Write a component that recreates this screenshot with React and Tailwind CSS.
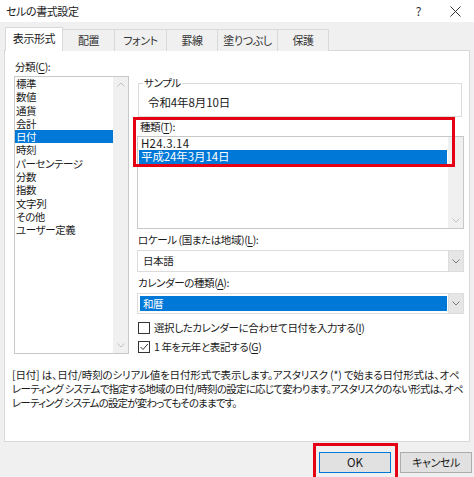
import React from 'react';

const tabs = [
  { label: '表示形式', w: 'w-[58px]', active: true },
  { label: '配置', w: 'w-[52px]' },
  { label: 'フォント', w: 'w-[52px]' },
  { label: '罫線', w: 'w-[51px]' },
  { label: '塗りつぶし', w: 'w-[60px]' },
  { label: '保護', w: 'w-[51px]' },
];

const categories = [
  '標準', '数値', '通貨', '会計', '日付', '時刻',
  'パーセンテージ', '分数', '指数', '文字列', 'その他', 'ユーザー定義',
];

const Chevron = ({ up, className = '' }) => (
  <svg width="8" height="5" viewBox="0 0 8 5" className={className}>
    <path
      d={up ? 'M0.5 4.5L4 1L7.5 4.5' : 'M0.5 0.5L4 4L7.5 0.5'}
      fill="none"
      stroke="currentColor"
      strokeWidth="1"
    />
  </svg>
);

const Key = ({ children }) => (
  <span className="underline underline-offset-[2px]">{children}</span>
);

const Checkbox = ({ checked, children, className = '' }) => (
  <div className={`flex items-center h-[16px] ${className}`}>
    <div className="w-[12px] h-[12px] border border-[#333] bg-white flex items-center justify-center ml-[1px]">
      {checked && (
        <svg width="10" height="10" viewBox="0 0 10 10">
          <path d="M1.5 5L4 7.5L8.8 2" fill="none" stroke="#333" strokeWidth="1" />
        </svg>
      )}
    </div>
    <span className="ml-[4px]">{children}</span>
  </div>
);

const Combo = ({ value, selected, className = '' }) => (
  <div className={`flex items-stretch w-[327px] border border-[#dcdcdc] bg-white ${className}`}>
    <div className="flex-1 flex items-center p-[2px] pr-[1px]">
      <div className={`flex-1 h-full flex items-center pl-[3px] ${selected ? 'bg-[#0078d7] text-white' : ''}`}>
        {value}
      </div>
    </div>
    <div className="w-[15px] bg-[#e6e6e6] border-l border-[#dcdcdc] flex items-center justify-center text-[#7a7a7a]">
      <Chevron />
    </div>
  </div>
);

export default function App() {
  return (
    <div className="relative w-[474px] h-[477px] overflow-hidden bg-[#f0f0f0] text-[10.5px] tracking-[-0.4px] text-[#1a1a1a] font-['Noto_Sans_CJK_JP','Noto_Sans',sans-serif] [font-feature-settings:'palt']">
      {/* Title bar */}
      <div className="h-[22px] bg-white flex items-center pl-[6px]">
        <span className="text-[11px] leading-[16px]">セルの書式設定</span>
        <span className="ml-auto text-[12px] text-[#333] mr-[29px]">?</span>
        <svg width="11" height="11" viewBox="0 0 11 11" className="mr-[13px]">
          <path d="M0.5 0.5L10.5 10.5M10.5 0.5L0.5 10.5" stroke="#333" strokeWidth="1" />
        </svg>
      </div>

      {/* Tabs */}
      <div className="flex items-end h-[24px] mt-[5px] pl-[5px]">
        {tabs.map((t) =>
          t.active ? (
            <div
              key={t.label}
              className={`${t.w} relative z-10 h-[24px] bg-white border-x border-t border-[#d9d9d9] flex items-center justify-center pb-[2px] text-[11px]`}
            >
              {t.label}
            </div>
          ) : (
            <div
              key={t.label}
              className={`${t.w} h-[22px] bg-[#f0f0f0] border-r border-t border-[#d9d9d9] flex items-center justify-center text-[#333] pb-[1px] text-[11px]`}
            >
              {t.label}
            </div>
          )
        )}
      </div>

      {/* Panel */}
      <div className="mx-[4px] -mt-[1px] h-[392px] border border-[#d9d9d9] bg-white flex flex-col">
        <div className="flex items-start">
          {/* Category */}
          <div className="ml-[9px] w-[115px]">
            <div className="mt-[8px] leading-[16px] pl-[1px]">
              分類(<Key>C</Key>):
            </div>
            <div className="mt-[1px] h-[278px] border border-[#c8c8c8] flex">
              <div className="w-[98px]">
                {categories.map((c) => (
                  <div
                    key={c}
                    className={`h-[13.3px] leading-[13.3px] pl-[1px] whitespace-nowrap ${
                      c === '日付' ? 'bg-[#0078d7] text-white' : ''
                    }`}
                  >
                    {c}
                  </div>
                ))}
              </div>
              <div className="flex-1 bg-[#f0f0f0] flex flex-col items-center justify-between py-[5px] text-[#c0c0c0]">
                <Chevron up />
                <Chevron />
              </div>
            </div>
          </div>

          {/* Right side */}
          <div className="ml-[8px] w-[327px]">
            <fieldset className="mt-[24px] ml-[1px] w-[324px] border border-[#dcdcdc] px-[9px] pb-[6px]">
              <legend className="-ml-[5px] px-[1px] leading-[16px]">サンプル</legend>
              <div className="mt-[3px] leading-[16px] text-[11.5px] tracking-[-0.1px]">令和4年8月10日</div>
            </fieldset>

            <div className="mt-[2px] leading-[16px] pl-[3px]">
              種類(<Key>T</Key>):
            </div>
            <div className="mt-[1px] h-[93px] border border-[#c8c8c8] flex">
              <div className="w-[308px] ml-[1px] text-[11.5px] tracking-[-0.1px]">
                <div className="h-[13.3px] leading-[13.3px] pl-[2px] tracking-[0.2px]">H24.3.14</div>
                <div className="h-[13.3px] leading-[13.3px] pl-[2px] bg-[#0078d7] text-white">
                  平成24年3月14日
                </div>
              </div>
              <div className="ml-auto w-[15px] bg-[#f0f0f0] flex flex-col items-center justify-end pb-[5px] text-[#c0c0c0]">
                <Chevron />
              </div>
            </div>

            <div className="mt-[3px] leading-[16px] pl-[1px]">
              ロケール (国または地域)(<Key>L</Key>):
            </div>
            <Combo value="日本語" className="mt-[2px] h-[22px]" />

            <div className="mt-[3px] leading-[16px] pl-[1px]">
              カレンダーの種類(<Key>A</Key>):
            </div>
            <Combo value="和暦" selected className="mt-[2px] h-[21px]" />

            <Checkbox className="mt-[6px]">
              選択したカレンダーに合わせて日付を入力する(<Key>I</Key>)
            </Checkbox>
            <Checkbox checked className="mt-[3px]">
              1 年を元年と表記する(<Key>G</Key>)
            </Checkbox>
          </div>
        </div>

        {/* Description */}
        <div className="mt-[13px] pl-[7px] leading-[14px] whitespace-nowrap">
          <div className="tracking-[-0.15px]">[日付] は、日付/時刻のシリアル値を日付形式で表示します。アスタリスク (*) で始まる日付形式は、オペ</div>
          <div className="tracking-[-0.75px]">レーティング システムで指定する地域の日付/時刻の設定に応じて変わります。アスタリスクのない形式は、オペ</div>
          <div className="tracking-[-0.85px]">レーティング システムの設定が変わってもそのままです。</div>
        </div>
      </div>

      {/* Buttons */}
      <div className="flex justify-end gap-[9px] mt-[10px] pr-[2px]">
        <button className="w-[72px] h-[21px] border border-[#0078d7] bg-[#e1e1e1] text-[11.5px] leading-none tracking-normal">
          OK
        </button>
        <button className="w-[72px] h-[21px] border border-[#adadad] bg-[#e1e1e1] text-[11px] leading-none">
          キャンセル
        </button>
      </div>

      {/* Red annotation boxes */}
      <div className="absolute left-[133px] top-[117px] w-[322px] h-[50px] border-[3px] border-[#e50014]" />
      <div className="absolute left-[313px] top-[443px] w-[85px] h-[40px] border-[3px] border-[#e50014]" />
    </div>
  );
}
